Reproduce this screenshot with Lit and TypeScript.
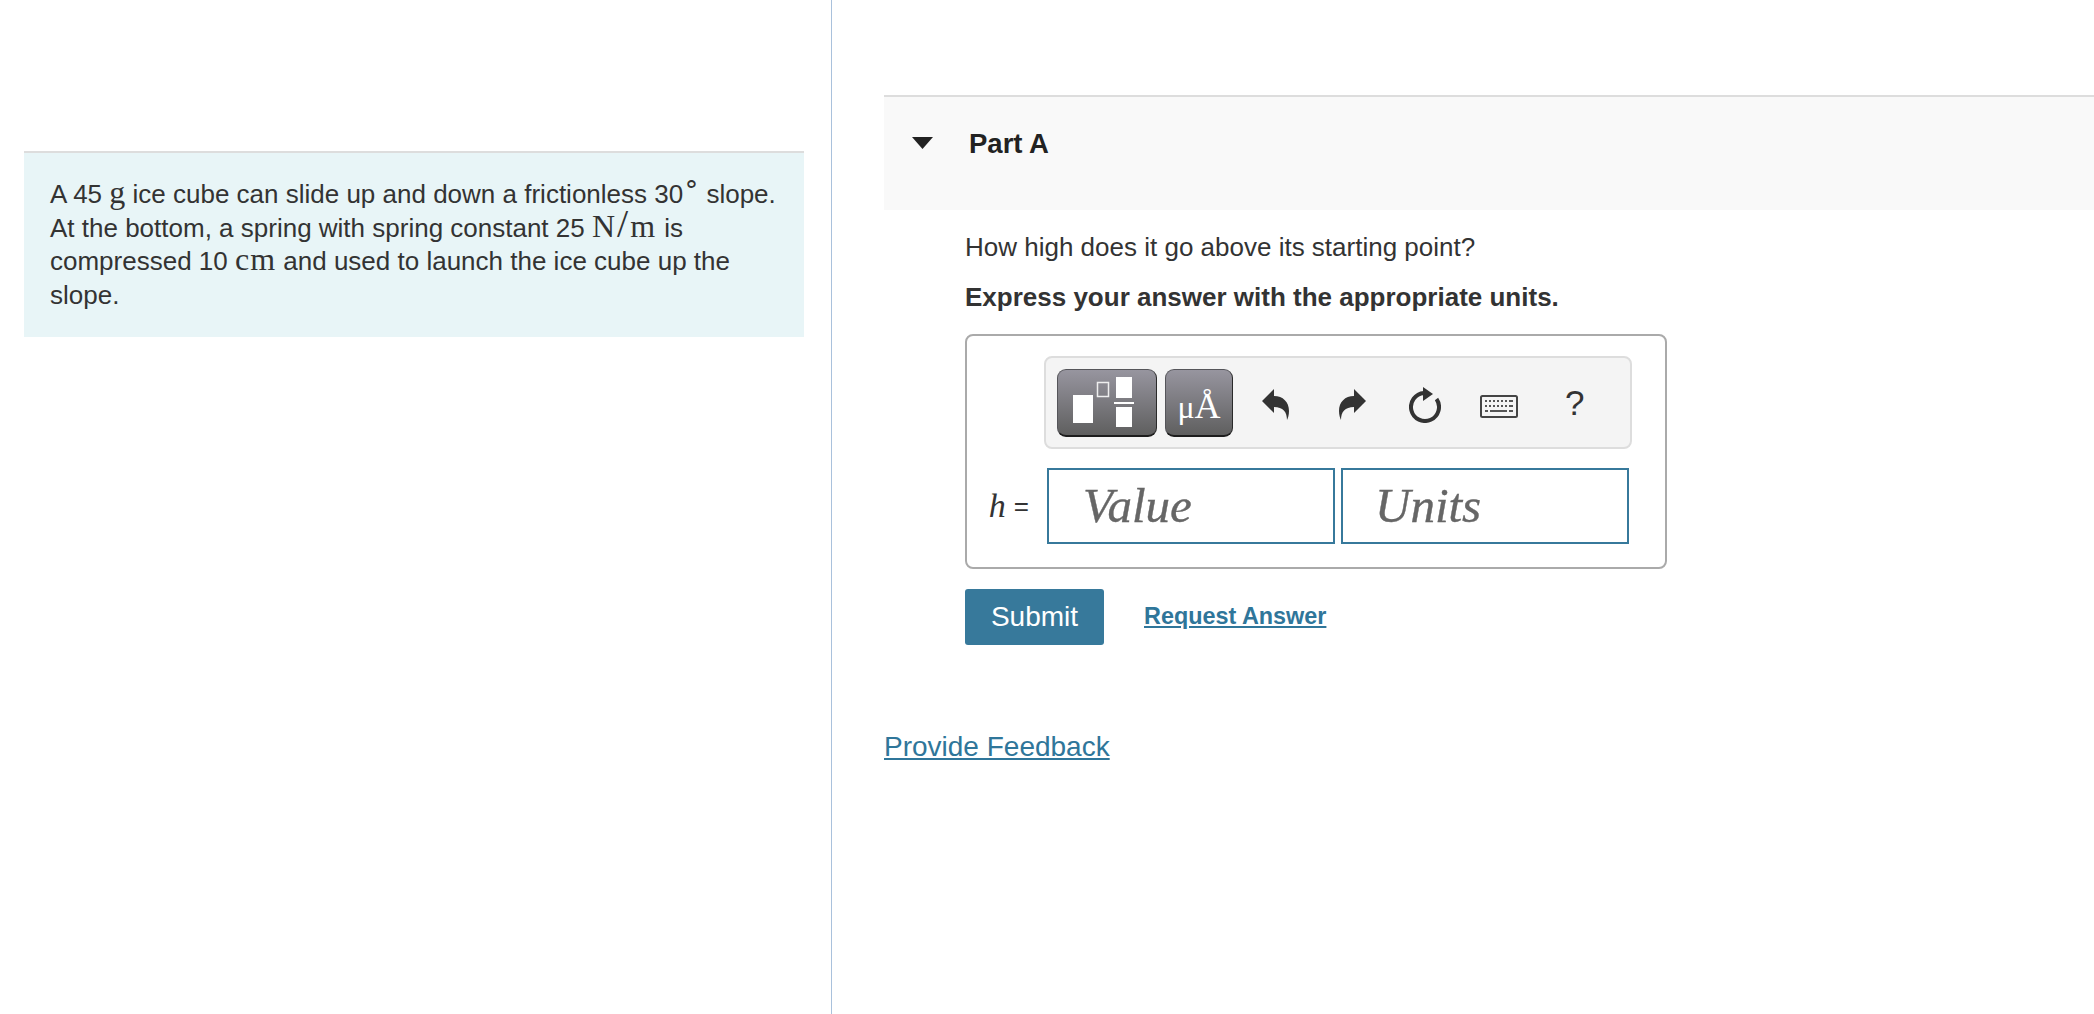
//
// problem page - part a
//

import {
  LitElement,
  html,
  css
} from 'lit'

import {
  customElement
} from 'lit/decorators.js'


@customElement('app-root')

export class AppRoot extends LitElement {

  static styles = css`
    :host {
      background-color: #fff;
      color: #333;
      display: flex;
      font-family: "Liberation Sans", Arial, sans-serif;
      font-size: 26px;
      height: 1014px;
      overflow: hidden;
    }

    .left {
      border-right: solid 1px #a9c1dc;
      flex: 0 0 832px;
      box-sizing: border-box;
      padding-left: 24px;
      padding-top: 151px;
    }

    .intro {
      background-color: #e8f5f7;
      border-top: solid 2px #ddd;
      box-sizing: border-box;
      height: 186px;
      line-height: 33.5px;
      padding: 25px 26px 0;
      width: 780px;
    }

    .math {
      font-family: "Liberation Serif", serif;
      font-size: 32px;
      line-height: 0;
    }

    .math.spaced {
      letter-spacing: 1px;
    }

    .math.ratio {
      letter-spacing: 2px;
    }

    .slash {
      font-size: 40px;
      font-weight: normal;
    }

    sup {
      font-size: 27px;
      letter-spacing: -1px;
      line-height: 0;
      vertical-align: 10px;
    }

    .right {
      flex: 1;
      min-width: 0;
      padding-left: 52px;
      padding-top: 95px;
    }

    .part-head {
      align-items: flex-start;
      background-color: #f9f9f9;
      border-top: solid 2px #ddd;
      box-sizing: border-box;
      color: #222;
      display: flex;
      font-size: 27.5px;
      font-weight: bold;
      height: 115px;
      padding-left: 28px;
      padding-top: 31px;
    }

    .part-head svg {
      margin-right: 36px;
      margin-top: 9px;
    }

    .part-body {
      padding-left: 81px;
      padding-top: 20px;
    }

    .part-body p {
      line-height: 34px;
      margin: 0 0 16px;
    }

    .answer {
      align-content: start;
      border: solid 2px #aaa;
      border-radius: 8px;
      box-sizing: border-box;
      display: grid;
      grid-template-columns: 77px auto;
      height: 235px;
      justify-content: start;
      margin-top: 20px;
      padding-top: 20px;
      row-gap: 19px;
      width: 702px;
    }

    .toolbar {
      align-items: center;
      background-color: #f4f4f4;
      border: solid 2px #ddd;
      border-radius: 8px;
      box-sizing: border-box;
      display: flex;
      grid-column: 2;
      height: 93px;
      padding-left: 11px;
      width: 588px;
    }

    .tool {
      background: linear-gradient(#97959f, #5f5f5f);
      border: solid 1px #55555a;
      border-bottom: solid 2px #1d1d1d;
      border-right-color: #2a2a2a;
      border-radius: 9px;
      box-sizing: border-box;
      display: block;
      height: 68px;
      padding: 0;
    }

    .tool.templates {
      width: 100px;
    }

    .tool.symbols {
      color: #fff;
      font-family: "Liberation Serif", serif;
      font-size: 36px;
      line-height: 73px;
      margin-left: 8px;
      text-align: center;
      width: 68px;
    }

    .tool.symbols .micro {
      font-size: 32px;
    }

    .icon {
      display: block;
      flex: none;
    }

    .undo {
      margin-left: 29px;
      margin-top: 4px;
    }

    .redo {
      margin-left: 50px;
      margin-top: 4px;
    }

    .reset {
      margin-left: 43px;
      margin-top: 4px;
    }

    .keyboard {
      margin-left: 39px;
      margin-top: 8px;
    }

    .help {
      color: #333;
      font-size: 35px;
      margin-left: 47px;
    }

    .label {
      align-items: center;
      display: flex;
      font-size: 26px;
      justify-content: flex-end;
      padding-right: 15px;
    }

    .label i {
      font-family: "Liberation Serif", serif;
      font-size: 34px;
      margin-right: 8px;
    }

    .inputs {
      display: flex;
      gap: 6px;
      margin-left: 3px;
    }

    .field {
      border: solid 2px #37799b;
      box-sizing: border-box;
      color: #666;
      font-family: "Liberation Serif", serif;
      font-size: 49px;
      font-style: italic;
      height: 76px;
      line-height: 72px;
      padding-left: 34px;
      -webkit-text-stroke: 0.4px #666;
      width: 288px;
    }

    .field.units {
      padding-left: 32px;
    }

    .actions {
      align-items: center;
      display: flex;
      margin-top: 20px;
    }

    .submit {
      background-color: #37799b;
      border-radius: 3px;
      box-sizing: border-box;
      color: #fff;
      font-size: 28px;
      height: 56px;
      line-height: 56px;
      text-align: center;
      width: 139px;
    }

    a {
      color: #2f769a;
      text-decoration: underline;
    }

    .request {
      font-size: 23.4px;
      font-weight: bold;
      margin-left: 40px;
      margin-top: -2px;
    }

    .feedback {
      display: inline-block;
      font-size: 28px;
      margin-top: 86px;
    }
  `

  protected render() {

    return html`
      <div class="left">
        <div class="intro">
          A 45 <span class="math">g</span> ice cube can slide up and down a frictionless 30<sup>∘</sup> slope.
          At the bottom, a spring with spring constant 25 <span class="math ratio">N<span class="slash">/</span>m</span> is
          compressed 10 <span class="math spaced">cm</span> and used to launch the ice cube up the
          slope.
        </div>
      </div>
      <div class="right">
        <div class="part-head">
          <svg width="21" height="12" viewBox="0 0 21 12"><path d="M0 0h21L10.5 12z" fill="#222"/></svg>
          Part A
        </div>
        <div class="part-body">
          <p>How high does it go above its starting point?</p>
          <p><b>Express your answer with the appropriate units.</b></p>
          <div class="answer">
            <div class="toolbar">
              <div class="tool templates">
                <svg width="98" height="66" viewBox="0 0 98 66">
                  <g fill="#fff">
                    <rect x="15" y="25" width="20" height="28"/>
                    <rect x="58" y="7" width="16" height="21"/>
                    <rect x="56" y="32" width="20" height="2"/>
                    <rect x="58" y="37" width="16" height="20"/>
                  </g>
                  <rect x="39.500" y="12.500" width="11" height="14" fill="none" stroke="#eee" stroke-width="1.500"/>
                </svg>
              </div>
              <div class="tool symbols"><span class="micro">μ</span>Å</div>
              <svg class="icon undo" width="27" height="31" viewBox="0 0 27 31">
                <path d="M0 12 12 0v7c9 0 15 6 15 15 0 4-1 7-2 9 0-8-4-13-13-13v6z" fill="#333"/>
              </svg>
              <svg class="icon redo" width="27" height="31" viewBox="0 0 27 31">
                <path d="M27 12 15 0v7C6 7 0 13 0 22c0 4 1 7 2 9 0-8 4-13 13-13v6z" fill="#333"/>
              </svg>
              <svg class="icon reset" width="32" height="36" viewBox="0 0 32 36">
                <path d="M15 6A14 14 0 1 0 27.500 12" fill="none" stroke="#333" stroke-width="4"/>
                <path d="M14 0l10 7-10 7z" fill="#333"/>
              </svg>
              <svg class="icon keyboard" width="38" height="23" viewBox="0 0 38 23">
                <rect x="1" y="1" width="36" height="21" rx="1.500" fill="none" stroke="#444" stroke-width="2"/>
                <path d="M5 6h2M9 6h2M13 6h2M17 6h2M21 6h2M25 6h2M29 6h4M5 11h2M9 11h2M13 11h2M17 11h2M21 11h2M25 11h2M29 11h4M5 16h3M10 16h17M29 16h4" stroke="#555" stroke-width="2" fill="none"/>
              </svg>
              <span class="help">?</span>
            </div>
            <div class="label"><i>h</i>=</div>
            <div class="inputs">
              <div class="field">Value</div>
              <div class="field units">Units</div>
            </div>
          </div>
          <div class="actions">
            <div class="submit">Submit</div>
            <a class="request" href="#">Request Answer</a>
          </div>
        </div>
        <a class="feedback" href="#">Provide Feedback</a>
      </div>
    `

  }

}
